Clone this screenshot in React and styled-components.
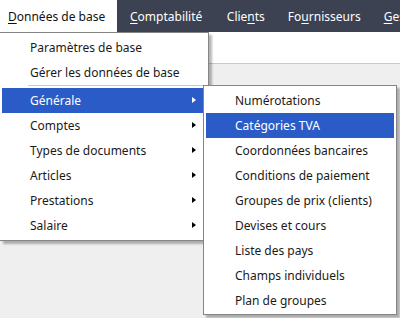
import React from "react";
import styled, { createGlobalStyle } from "styled-components";

const Global = createGlobalStyle`
  html, body { margin: 0; padding: 0; }
  body { width: 400px; height: 318px; overflow: hidden; background: #fff;
    font-family: "Noto Sans", "Open Sans", sans-serif; font-size: 12px; }
`;

const Page = styled.div`
  position: relative;
  width: 400px;
  height: 318px;
  display: flex;
  flex-direction: column;
  overflow: hidden;
`;

const Bar = styled.div`
  height: 32px;
  background: #3c4251;
  display: flex;
  align-items: stretch;
  flex-shrink: 0;
  white-space: nowrap;
`;

const BarItem = styled.div`
  display: flex;
  align-items: center;
  flex-shrink: 0;
  box-sizing: border-box;
  ${(p) => (p.$w ? `width: ${p.$w}px;` : "")}
  padding: 0 ${(p) => p.$pad ?? 11.5}px;
  color: ${(p) => (p.$active ? "#111" : "#fff")};
  background: ${(p) => (p.$active ? "#fff" : "transparent")};
  font-size: 12px;
  u { text-decoration: underline; text-underline-offset: 2px; }
`;

const Strip = styled.div`
  height: 31px;
  background: #fff;
  border-bottom: 1px solid #c9c9c9;
  flex-shrink: 0;
`;

const Canvas = styled.div`
  flex: 1;
  background: #efefef;
`;

const Menu = styled.div`
  position: absolute;
  left: ${(p) => p.$x}px;
  top: ${(p) => p.$y}px;
  width: ${(p) => p.$w}px;
  height: ${(p) => p.$h}px;
  background: #fff;
  border: 1px solid #858585;
  ${(p) => (p.$noLeft ? "border-left: none;" : "")}
  padding: 2px;
  box-sizing: border-box;
  box-shadow: 3px 3px 2px rgba(0, 0, 0, 0.28);
  z-index: ${(p) => p.$z || 1};
`;

const Item = styled.div`
  position: relative;
  height: 25px;
  display: flex;
  align-items: center;
  padding-left: ${(p) => p.$indent}px;
  color: ${(p) => (p.$hl ? "#fff" : "#1a1a1a")};
  background: ${(p) => (p.$hl ? "#2a5bc7" : "transparent")};
  white-space: nowrap;
  font-size: 12px;
  ${(p) => (p.$extend ? "margin-right: -6px;" : "")}
`;

const Arrow = styled.span`
  position: absolute;
  right: ${(p) => p.$r}px;
  top: 9px;
  width: 0;
  height: 0;
  border-top: 3.5px solid transparent;
  border-bottom: 3.5px solid transparent;
  border-left: 4px solid ${(p) => (p.$hl ? "#fff" : "#000")};
`;

const Sep = styled.div`
  height: 2px;
  margin-left: 26px;
  border-top: 1px solid #c8c8c8;
`;

const main = [
  { t: "Paramètres de base" },
  { t: "Gérer les données de base" },
  { sep: true },
  { t: "Générale", sub: true, hl: true },
  { t: "Comptes", sub: true },
  { t: "Types de documents", sub: true },
  { t: "Articles", sub: true },
  { t: "Prestations", sub: true },
  { t: "Salaire", sub: true },
];

const sub = [
  "Numérotations",
  "Catégories TVA",
  "Coordonnées bancaires",
  "Conditions de paiement",
  "Groupes de prix (clients)",
  "Devises et cours",
  "Liste des pays",
  "Champs individuels",
  "Plan de groupes",
];

export default function App() {
  return (
    <Page>
      <Global />
      <Bar>
        <BarItem $active $pad={8} $w={117}>
          <span><u>D</u>onnées de base</span>
        </BarItem>
        <BarItem $pad={13}><span><u>C</u>omptabilité</span></BarItem>
        <BarItem><span>Clie<u>n</u>ts</span></BarItem>
        <BarItem><span>Fo<u>u</u>rnisseurs</span></BarItem>
        <BarItem><span><u>G</u>estion</span></BarItem>
      </Bar>
      <Strip />
      <Canvas />
      <Menu $x={0} $y={32} $w={209} $h={209} $noLeft $z={1}>
        {main.map((m, i) =>
          m.sep ? (
            <Sep key={i} />
          ) : (
            <Item key={i} $indent={28} $hl={m.hl} $extend={m.hl}>
              {m.t}
              {m.sub && <Arrow $r={m.hl ? 16 : 10} $hl={m.hl} />}
            </Item>
          )
        )}
      </Menu>
      <Menu $x={203} $y={85} $w={194} $h={230} $z={2}>
        {sub.map((s, i) => (
          <Item key={i} $indent={29} $hl={i === 1}>
            {s}
          </Item>
        ))}
      </Menu>
    </Page>
  );
}
